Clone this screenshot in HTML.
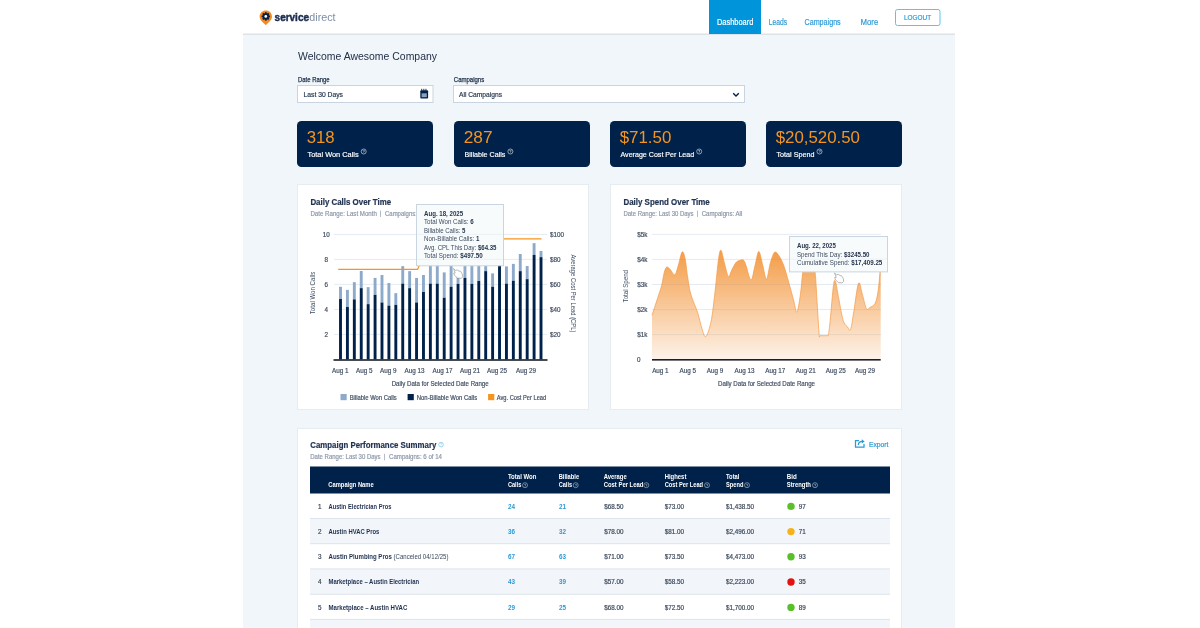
<!DOCTYPE html>
<html><head><meta charset="utf-8"><title>Service Direct Dashboard</title>
<style>
html,body{margin:0;padding:0;background:#ffffff;width:1200px;height:628px;overflow:hidden;}
svg{display:block;font-family:"Liberation Sans", sans-serif;will-change:transform;}
</style></head><body>
<svg width="1200" height="628" viewBox="0 0 1200 628">
<rect x="0.00" y="0.00" width="1200.00" height="628.00" fill="#ffffff" />
<rect x="243.00" y="34.00" width="712.00" height="594.00" fill="#f1f6fa" />
<rect x="243.00" y="33.60" width="712.00" height="1.10" fill="#d5dae0" />
<g transform="translate(265.8,16.6)"><path d="M0,-6.2 C3.5,-6.2 6.2,-3.5 6.2,0 C6.2,3.6 2.5,6.2 0,8.6 C-2.5,6.2 -6.2,3.6 -6.2,0 C-6.2,-3.5 -3.5,-6.2 0,-6.2 Z" fill="#f7891f"/></g>
<g transform="translate(265.8,16.4)"><rect x="-0.9" y="-4.2" width="1.8" height="2" transform="rotate(0)" fill="#00224a"/><rect x="-0.9" y="-4.2" width="1.8" height="2" transform="rotate(45)" fill="#00224a"/><rect x="-0.9" y="-4.2" width="1.8" height="2" transform="rotate(90)" fill="#00224a"/><rect x="-0.9" y="-4.2" width="1.8" height="2" transform="rotate(135)" fill="#00224a"/><rect x="-0.9" y="-4.2" width="1.8" height="2" transform="rotate(180)" fill="#00224a"/><rect x="-0.9" y="-4.2" width="1.8" height="2" transform="rotate(225)" fill="#00224a"/><rect x="-0.9" y="-4.2" width="1.8" height="2" transform="rotate(270)" fill="#00224a"/><rect x="-0.9" y="-4.2" width="1.8" height="2" transform="rotate(315)" fill="#00224a"/><circle r="3.2" fill="#00224a"/><circle r="1.4" fill="#ffffff"/></g>
<text x="274.60" y="20.60" font-size="10.00" fill="#1c2d4f" font-weight="700" textLength="34.40" lengthAdjust="spacingAndGlyphs" stroke="#1c2d4f" stroke-width="0.45">service</text>
<text x="309.30" y="20.60" font-size="10.20" fill="#7d8ea6" font-weight="300" textLength="26.20" lengthAdjust="spacingAndGlyphs" >direct</text>
<rect x="709.00" y="0.00" width="52.00" height="34.00" fill="#0094db" />
<text x="717.00" y="25.00" font-size="8.30" fill="#ffffff" textLength="36.30" lengthAdjust="spacingAndGlyphs" stroke="#ffffff" stroke-width="0.18" >Dashboard</text>
<text x="768.80" y="25.00" font-size="8.30" fill="#2b9ad6" textLength="18.40" lengthAdjust="spacingAndGlyphs" stroke="#2b9ad6" stroke-width="0.18" >Leads</text>
<text x="804.50" y="25.00" font-size="8.30" fill="#2b9ad6" textLength="36.20" lengthAdjust="spacingAndGlyphs" stroke="#2b9ad6" stroke-width="0.18" >Campaigns</text>
<text x="860.50" y="25.00" font-size="8.30" fill="#2b9ad6" textLength="17.70" lengthAdjust="spacingAndGlyphs" stroke="#2b9ad6" stroke-width="0.18" >More</text>
<rect x="895.5" y="9.5" width="44.5" height="16" rx="2" fill="#ffffff" stroke="#5ec3ec" stroke-width="1"/>
<text x="904.00" y="20.20" font-size="6.60" fill="#2a9ed8" textLength="27.20" lengthAdjust="spacingAndGlyphs" stroke="#2a9ed8" stroke-width="0.18" >LOGOUT</text>
<text x="298.00" y="59.70" font-size="10.80" fill="#223048" textLength="139.00" lengthAdjust="spacingAndGlyphs" >Welcome Awesome Company</text>
<text x="298.00" y="82.20" font-size="6.50" fill="#26364f" textLength="31.60" lengthAdjust="spacingAndGlyphs" stroke="#26364f" stroke-width="0.25">Date Range</text>
<text x="453.80" y="82.20" font-size="6.50" fill="#26364f" textLength="30.40" lengthAdjust="spacingAndGlyphs" stroke="#26364f" stroke-width="0.25">Campaigns</text>
<rect x="297.5" y="85.5" width="135.5" height="17" fill="#ffffff" stroke="#c9d4e1" stroke-width="1"/>
<rect x="453.5" y="85.5" width="291" height="17" fill="#ffffff" stroke="#c9d4e1" stroke-width="1"/>
<text x="303.50" y="96.70" font-size="6.90" fill="#26364f" textLength="39.50" lengthAdjust="spacingAndGlyphs" stroke="#26364f" stroke-width="0.18" >Last 30 Days</text>
<text x="459.00" y="96.60" font-size="6.90" fill="#26364f" textLength="43.00" lengthAdjust="spacingAndGlyphs" stroke="#26364f" stroke-width="0.18" >All Campaigns</text>
<g><rect x="420.3" y="90.2" width="7.8" height="8.3" rx="1" fill="#00224a"/><rect x="421.6" y="93.3" width="5.2" height="3.9" fill="#8aa0bd"/><rect x="421.3" y="88.8" width="0.9" height="1.8" fill="#00224a"/><rect x="423.4" y="88.8" width="0.9" height="1.8" fill="#00224a"/><rect x="425.5" y="88.8" width="0.9" height="1.8" fill="#00224a"/></g>
<path d="M733.2,93.2 L736,96 L738.8,93.2" fill="none" stroke="#00224a" stroke-width="1.4"/>
<rect x="297.00" y="121.00" width="136.00" height="46.00" fill="#00224a" rx="4.5" />
<text x="306.70" y="143.00" font-size="16.60" fill="#f7941d" textLength="28.00" lengthAdjust="spacingAndGlyphs" >318</text>
<text x="307.50" y="156.60" font-size="7.70" fill="#ffffff" textLength="51.20" lengthAdjust="spacingAndGlyphs" stroke="#ffffff" stroke-width="0.18" >Total Won Calls</text>
<circle cx="363.7" cy="151.5" r="2.5" fill="none" stroke="#ffffff" stroke-width="0.55"/>
<text x="363.7" y="153.05" font-size="3.88" fill="#ffffff" text-anchor="middle">?</text>
<rect x="454.00" y="121.00" width="136.00" height="46.00" fill="#00224a" rx="4.5" />
<text x="463.70" y="143.00" font-size="16.60" fill="#f7941d" textLength="28.80" lengthAdjust="spacingAndGlyphs" >287</text>
<text x="464.50" y="156.60" font-size="7.70" fill="#ffffff" textLength="40.90" lengthAdjust="spacingAndGlyphs" stroke="#ffffff" stroke-width="0.18" >Billable Calls</text>
<circle cx="510.4" cy="151.5" r="2.5" fill="none" stroke="#ffffff" stroke-width="0.55"/>
<text x="510.4" y="153.05" font-size="3.88" fill="#ffffff" text-anchor="middle">?</text>
<rect x="610.00" y="121.00" width="136.00" height="46.00" fill="#00224a" rx="4.5" />
<text x="619.70" y="143.00" font-size="16.60" fill="#f7941d" textLength="51.60" lengthAdjust="spacingAndGlyphs" >$71.50</text>
<text x="620.50" y="156.60" font-size="7.70" fill="#ffffff" textLength="73.70" lengthAdjust="spacingAndGlyphs" stroke="#ffffff" stroke-width="0.18" >Average Cost Per Lead</text>
<circle cx="699.2" cy="151.5" r="2.5" fill="none" stroke="#ffffff" stroke-width="0.55"/>
<text x="699.2" y="153.05" font-size="3.88" fill="#ffffff" text-anchor="middle">?</text>
<rect x="766.00" y="121.00" width="136.00" height="46.00" fill="#00224a" rx="4.5" />
<text x="775.70" y="143.00" font-size="16.60" fill="#f7941d" textLength="84.30" lengthAdjust="spacingAndGlyphs" >$20,520.50</text>
<text x="776.50" y="156.60" font-size="7.70" fill="#ffffff" textLength="38.00" lengthAdjust="spacingAndGlyphs" stroke="#ffffff" stroke-width="0.18" >Total Spend</text>
<circle cx="819.5" cy="151.5" r="2.5" fill="none" stroke="#ffffff" stroke-width="0.55"/>
<text x="819.5" y="153.05" font-size="3.88" fill="#ffffff" text-anchor="middle">?</text>
<rect x="297.5" y="184.5" width="291" height="225" fill="#ffffff" stroke="#e6ecf2" stroke-width="1"/>
<rect x="610.5" y="184.5" width="291" height="225" fill="#ffffff" stroke="#e6ecf2" stroke-width="1"/>
<rect x="297.5" y="428.5" width="604" height="209" fill="#ffffff" stroke="#e6ecf2" stroke-width="1"/>
<text x="310.40" y="205.20" font-size="8.40" fill="#1f3050" font-weight="700" textLength="80.80" lengthAdjust="spacingAndGlyphs" stroke="#1f3050" stroke-width="0.2">Daily Calls Over Time</text>
<text x="310.40" y="215.80" font-size="6.40" fill="#8b97a8" textLength="66.50" lengthAdjust="spacingAndGlyphs" stroke="#8b97a8" stroke-width="0.18" >Date Range: Last Month</text>
<rect x="380.30" y="210.60" width="0.65" height="6.4" fill="#8b97a8"/>
<text x="385.00" y="215.80" font-size="6.40" fill="#8b97a8" textLength="39.80" lengthAdjust="spacingAndGlyphs" stroke="#8b97a8" stroke-width="0.18" >Campaigns: All</text>
<rect x="334.00" y="333.90" width="213.00" height="1.00" fill="#e4ebf3" />
<rect x="334.00" y="308.90" width="213.00" height="1.00" fill="#e4ebf3" />
<rect x="334.00" y="283.90" width="213.00" height="1.00" fill="#e4ebf3" />
<rect x="334.00" y="258.90" width="213.00" height="1.00" fill="#e4ebf3" />
<rect x="334.00" y="233.90" width="213.00" height="1.00" fill="#e4ebf3" />
<text x="326.30" y="336.60" font-size="6.30" fill="#3e4b5e" text-anchor="middle" stroke="#3e4b5e" stroke-width="0.18" >2</text>
<text x="326.30" y="311.60" font-size="6.30" fill="#3e4b5e" text-anchor="middle" stroke="#3e4b5e" stroke-width="0.18" >4</text>
<text x="326.30" y="286.60" font-size="6.30" fill="#3e4b5e" text-anchor="middle" stroke="#3e4b5e" stroke-width="0.18" >6</text>
<text x="326.30" y="261.60" font-size="6.30" fill="#3e4b5e" text-anchor="middle" stroke="#3e4b5e" stroke-width="0.18" >8</text>
<text x="326.30" y="236.60" font-size="6.30" fill="#3e4b5e" text-anchor="middle" stroke="#3e4b5e" stroke-width="0.18" >10</text>
<text x="550.00" y="336.60" font-size="6.30" fill="#3e4b5e" stroke="#3e4b5e" stroke-width="0.18" >$20</text>
<text x="550.00" y="311.60" font-size="6.30" fill="#3e4b5e" stroke="#3e4b5e" stroke-width="0.18" >$40</text>
<text x="550.00" y="286.60" font-size="6.30" fill="#3e4b5e" stroke="#3e4b5e" stroke-width="0.18" >$60</text>
<text x="550.00" y="261.60" font-size="6.30" fill="#3e4b5e" stroke="#3e4b5e" stroke-width="0.18" >$80</text>
<text x="550.00" y="236.60" font-size="6.30" fill="#3e4b5e" stroke="#3e4b5e" stroke-width="0.18" >$100</text>
<rect x="339.05" y="286.77" width="2.90" height="12.25" fill="#8eaacb" />
<rect x="339.05" y="299.02" width="2.90" height="60.38" fill="#00224a" />
<rect x="345.96" y="289.90" width="2.90" height="17.12" fill="#8eaacb" />
<rect x="345.96" y="307.02" width="2.90" height="52.38" fill="#00224a" />
<rect x="352.88" y="282.15" width="2.90" height="17.25" fill="#8eaacb" />
<rect x="352.88" y="299.40" width="2.90" height="60.00" fill="#00224a" />
<rect x="359.79" y="271.02" width="2.90" height="17.12" fill="#8eaacb" />
<rect x="359.79" y="288.15" width="2.90" height="71.25" fill="#00224a" />
<rect x="366.71" y="287.15" width="2.90" height="17.00" fill="#8eaacb" />
<rect x="366.71" y="304.15" width="2.90" height="55.25" fill="#00224a" />
<rect x="373.62" y="277.90" width="2.90" height="17.00" fill="#8eaacb" />
<rect x="373.62" y="294.90" width="2.90" height="64.50" fill="#00224a" />
<rect x="380.53" y="275.02" width="2.90" height="27.50" fill="#8eaacb" />
<rect x="380.53" y="302.52" width="2.90" height="56.88" fill="#00224a" />
<rect x="387.45" y="283.02" width="2.90" height="22.62" fill="#8eaacb" />
<rect x="387.45" y="305.65" width="2.90" height="53.75" fill="#00224a" />
<rect x="394.36" y="293.15" width="2.90" height="11.75" fill="#8eaacb" />
<rect x="394.36" y="304.90" width="2.90" height="54.50" fill="#00224a" />
<rect x="401.28" y="266.15" width="2.90" height="17.50" fill="#8eaacb" />
<rect x="401.28" y="283.65" width="2.90" height="75.75" fill="#00224a" />
<rect x="408.19" y="271.15" width="2.90" height="17.00" fill="#8eaacb" />
<rect x="408.19" y="288.15" width="2.90" height="71.25" fill="#00224a" />
<rect x="415.10" y="277.90" width="2.90" height="24.62" fill="#8eaacb" />
<rect x="415.10" y="302.52" width="2.90" height="56.88" fill="#00224a" />
<rect x="422.02" y="275.02" width="2.90" height="17.00" fill="#8eaacb" />
<rect x="422.02" y="292.02" width="2.90" height="67.38" fill="#00224a" />
<rect x="428.93" y="259.40" width="2.90" height="24.25" fill="#8eaacb" />
<rect x="428.93" y="283.65" width="2.90" height="75.75" fill="#00224a" />
<rect x="435.85" y="259.40" width="2.90" height="24.25" fill="#8eaacb" />
<rect x="435.85" y="283.65" width="2.90" height="75.75" fill="#00224a" />
<rect x="442.76" y="272.40" width="2.90" height="25.38" fill="#8eaacb" />
<rect x="442.76" y="297.77" width="2.90" height="61.62" fill="#00224a" />
<rect x="449.67" y="259.40" width="2.90" height="27.38" fill="#8eaacb" />
<rect x="449.67" y="286.77" width="2.90" height="72.62" fill="#00224a" />
<rect x="456.59" y="271.90" width="2.90" height="12.00" fill="#8eaacb" />
<rect x="456.59" y="283.90" width="2.90" height="75.50" fill="#00224a" />
<rect x="463.50" y="259.40" width="2.90" height="18.50" fill="#8eaacb" />
<rect x="463.50" y="277.90" width="2.90" height="81.50" fill="#00224a" />
<rect x="470.42" y="259.40" width="2.90" height="24.50" fill="#8eaacb" />
<rect x="470.42" y="283.90" width="2.90" height="75.50" fill="#00224a" />
<rect x="477.33" y="259.40" width="2.90" height="21.62" fill="#8eaacb" />
<rect x="477.33" y="281.02" width="2.90" height="78.38" fill="#00224a" />
<rect x="484.24" y="259.40" width="2.90" height="11.75" fill="#8eaacb" />
<rect x="484.24" y="271.15" width="2.90" height="88.25" fill="#00224a" />
<rect x="491.16" y="273.40" width="2.90" height="13.38" fill="#8eaacb" />
<rect x="491.16" y="286.77" width="2.90" height="72.62" fill="#00224a" />
<rect x="498.07" y="259.40" width="2.90" height="0.00" fill="#8eaacb" />
<rect x="498.07" y="259.40" width="2.90" height="100.00" fill="#00224a" />
<rect x="504.99" y="266.40" width="2.90" height="17.25" fill="#8eaacb" />
<rect x="504.99" y="283.65" width="2.90" height="75.75" fill="#00224a" />
<rect x="511.90" y="263.90" width="2.90" height="16.88" fill="#8eaacb" />
<rect x="511.90" y="280.77" width="2.90" height="78.62" fill="#00224a" />
<rect x="518.81" y="254.02" width="2.90" height="17.12" fill="#8eaacb" />
<rect x="518.81" y="271.15" width="2.90" height="88.25" fill="#00224a" />
<rect x="525.73" y="266.02" width="2.90" height="13.12" fill="#8eaacb" />
<rect x="525.73" y="279.15" width="2.90" height="80.25" fill="#00224a" />
<rect x="532.64" y="243.15" width="2.90" height="11.75" fill="#8eaacb" />
<rect x="532.64" y="254.90" width="2.90" height="104.50" fill="#00224a" />
<rect x="539.56" y="251.02" width="2.90" height="6.12" fill="#8eaacb" />
<rect x="539.56" y="257.15" width="2.90" height="102.25" fill="#00224a" />
<rect x="333.50" y="359.20" width="214.00" height="1.60" fill="#1b1f26" />
<path d="M338.2,269.4 L417.5,269.4 L420,264 L420,238.8 L541.5,238.8" fill="none" stroke="#f7941d" stroke-width="1.3"/>
<text x="332.00" y="373.00" font-size="6.30" fill="#3f4e63" stroke="#3f4e63" stroke-width="0.18" >Aug 1</text>
<text x="356.00" y="373.00" font-size="6.30" fill="#3f4e63" stroke="#3f4e63" stroke-width="0.18" >Aug 5</text>
<text x="380.00" y="373.00" font-size="6.30" fill="#3f4e63" stroke="#3f4e63" stroke-width="0.18" >Aug 9</text>
<text x="404.50" y="373.00" font-size="6.30" fill="#3f4e63" stroke="#3f4e63" stroke-width="0.18" >Aug 13</text>
<text x="432.50" y="373.00" font-size="6.30" fill="#3f4e63" stroke="#3f4e63" stroke-width="0.18" >Aug 17</text>
<text x="460.00" y="373.00" font-size="6.30" fill="#3f4e63" stroke="#3f4e63" stroke-width="0.18" >Aug 21</text>
<text x="487.00" y="373.00" font-size="6.30" fill="#3f4e63" stroke="#3f4e63" stroke-width="0.18" >Aug 25</text>
<text x="516.00" y="373.00" font-size="6.30" fill="#3f4e63" stroke="#3f4e63" stroke-width="0.18" >Aug 29</text>
<text x="440.20" y="386.00" font-size="6.60" fill="#3f4e63" text-anchor="middle" textLength="97.00" lengthAdjust="spacingAndGlyphs" stroke="#3f4e63" stroke-width="0.18" >Daily Data for Selected Date Range</text>
<text x="0" y="0" font-size="6.6" fill="#3f4e63" text-anchor="middle" transform="translate(315.2,293) rotate(-90)" textLength="42.4" lengthAdjust="spacingAndGlyphs">Total Won Calls</text>
<text x="0" y="0" font-size="6.6" fill="#3f4e63" text-anchor="middle" transform="translate(571.2,293.5) rotate(90)" textLength="78" lengthAdjust="spacingAndGlyphs">Average Cost Per Lead (CPL)</text>
<rect x="340.50" y="394.00" width="6.20" height="6.20" fill="#8eaacb" />
<text x="349.70" y="399.50" font-size="6.30" fill="#3f4e63" textLength="47.00" lengthAdjust="spacingAndGlyphs" stroke="#3f4e63" stroke-width="0.18" >Billable Won Calls</text>
<rect x="407.60" y="394.00" width="6.20" height="6.20" fill="#00224a" />
<text x="416.80" y="399.50" font-size="6.30" fill="#3f4e63" textLength="60.40" lengthAdjust="spacingAndGlyphs" stroke="#3f4e63" stroke-width="0.18" >Non-Billable Won Calls</text>
<rect x="488.10" y="394.00" width="6.20" height="6.20" fill="#f7941d" />
<text x="496.80" y="399.50" font-size="6.30" fill="#3f4e63" textLength="49.40" lengthAdjust="spacingAndGlyphs" stroke="#3f4e63" stroke-width="0.18" >Avg. Cost Per Lead</text>
<rect x="416.5" y="204.5" width="87" height="61.3" fill="#f8fbfb" stroke="#c9d6e2" stroke-width="1"/>
<rect x="417" y="233.9" width="86" height="1" fill="#e4ebf3" fill-opacity="0.6"/><rect x="417" y="258.9" width="86" height="1" fill="#e4ebf3" fill-opacity="0.6"/>
<text x="424.00" y="216.00" font-size="6.40" fill="#26364f" font-weight="700" textLength="39.10" lengthAdjust="spacingAndGlyphs" >Aug. 18, 2025</text>
<text x="424" y="224.30" font-size="6.4" fill="#3d4b60" textLength="49.70" lengthAdjust="spacingAndGlyphs">Total Won Calls: <tspan font-weight="700" fill="#26364f">6</tspan></text>
<text x="424" y="232.70" font-size="6.4" fill="#3d4b60" textLength="41.40" lengthAdjust="spacingAndGlyphs">Billable Calls: <tspan font-weight="700" fill="#26364f">5</tspan></text>
<text x="424" y="241.20" font-size="6.4" fill="#3d4b60" textLength="55.40" lengthAdjust="spacingAndGlyphs">Non-Billable Calls: <tspan font-weight="700" fill="#26364f">1</tspan></text>
<text x="424" y="249.60" font-size="6.4" fill="#3d4b60" textLength="72.40" lengthAdjust="spacingAndGlyphs">Avg. CPL This Day: <tspan font-weight="700" fill="#26364f">$64.35</tspan></text>
<text x="424" y="257.80" font-size="6.4" fill="#3d4b60" textLength="58.70" lengthAdjust="spacingAndGlyphs">Total Spend: <tspan font-weight="700" fill="#26364f">$497.50</tspan></text>
<path d="M453.5,268.5 l2.2,2 l1.5,-0.7 l1.8,1.3 l1.6,0.2 l1.6,2.5 l0.6,3 l-1.8,1.6 l-3.5,-0.3 l-3,-2.8 l-0.8,-2.2 l1.5,-0.2 z" fill="#ffffff" stroke="#8a8a8a" stroke-width="0.6"/>
<text x="623.40" y="205.00" font-size="8.40" fill="#1f3050" font-weight="700" textLength="86.40" lengthAdjust="spacingAndGlyphs" stroke="#1f3050" stroke-width="0.2">Daily Spend Over Time</text>
<text x="623.40" y="215.80" font-size="6.40" fill="#8b97a8" textLength="70.20" lengthAdjust="spacingAndGlyphs" stroke="#8b97a8" stroke-width="0.18" >Date Range: Last 30 Days</text>
<rect x="697.30" y="210.60" width="0.65" height="6.4" fill="#8b97a8"/>
<text x="701.70" y="215.80" font-size="6.40" fill="#8b97a8" textLength="40.60" lengthAdjust="spacingAndGlyphs" stroke="#8b97a8" stroke-width="0.18" >Campaigns: All</text>
<rect x="652.00" y="334.05" width="229.00" height="1.00" fill="#e4ebf3" />
<rect x="652.00" y="309.00" width="229.00" height="1.00" fill="#e4ebf3" />
<rect x="652.00" y="283.95" width="229.00" height="1.00" fill="#e4ebf3" />
<rect x="652.00" y="258.90" width="229.00" height="1.00" fill="#e4ebf3" />
<rect x="652.00" y="233.85" width="229.00" height="1.00" fill="#e4ebf3" />
<text x="647.30" y="336.75" font-size="6.30" fill="#3e4b5e" text-anchor="end" stroke="#3e4b5e" stroke-width="0.18" >$1k</text>
<text x="647.30" y="311.70" font-size="6.30" fill="#3e4b5e" text-anchor="end" stroke="#3e4b5e" stroke-width="0.18" >$2k</text>
<text x="647.30" y="286.65" font-size="6.30" fill="#3e4b5e" text-anchor="end" stroke="#3e4b5e" stroke-width="0.18" >$3k</text>
<text x="647.30" y="261.60" font-size="6.30" fill="#3e4b5e" text-anchor="end" stroke="#3e4b5e" stroke-width="0.18" >$4k</text>
<text x="647.30" y="236.55" font-size="6.30" fill="#3e4b5e" text-anchor="end" stroke="#3e4b5e" stroke-width="0.18" >$5k</text>
<text x="637.00" y="361.80" font-size="6.30" fill="#3e4b5e" stroke="#3e4b5e" stroke-width="0.18" >0</text>
<defs><linearGradient id="ag" x1="0" y1="240" x2="0" y2="360" gradientUnits="userSpaceOnUse"><stop offset="0" stop-color="#f39437"/><stop offset="1" stop-color="#fdf3ea"/></linearGradient></defs>
<path d="M652.00,315.30 C652.92,312.50 655.88,303.52 657.50,298.50 C659.12,293.48 660.58,289.52 661.70,285.20 C662.82,280.88 663.37,275.62 664.20,272.60 C665.03,269.58 665.72,267.65 666.70,267.10 C667.68,266.55 668.75,268.02 670.10,269.30 C671.45,270.58 673.42,275.52 674.80,274.80 C676.18,274.08 677.18,268.80 678.40,265.00 C679.62,261.20 680.98,253.10 682.10,252.00 C683.22,250.90 684.18,254.27 685.10,258.40 C686.02,262.53 686.75,271.23 687.60,276.80 C688.45,282.37 689.22,287.62 690.20,291.80 C691.18,295.98 692.25,298.42 693.50,301.90 C694.75,305.38 696.30,308.25 697.70,312.70 C699.10,317.15 700.65,324.60 701.90,328.60 C703.15,332.60 704.10,336.28 705.20,336.70 C706.30,337.12 707.38,334.40 708.50,331.10 C709.62,327.80 710.78,323.72 711.90,316.90 C713.02,310.08 714.08,299.95 715.20,290.20 C716.32,280.45 717.62,265.03 718.60,258.40 C719.58,251.77 720.13,249.63 721.10,250.40 C722.07,251.17 723.18,258.65 724.40,263.00 C725.62,267.35 727.18,275.32 728.40,276.50 C729.62,277.68 730.45,272.42 731.70,270.10 C732.95,267.78 734.60,264.20 735.90,262.60 C737.20,261.00 738.25,260.92 739.50,260.50 C740.75,260.08 742.33,259.33 743.40,260.10 C744.47,260.87 744.63,261.77 745.90,265.10 C747.17,268.43 749.47,280.10 751.00,280.10 C752.53,280.10 753.80,269.88 755.10,265.10 C756.40,260.32 757.53,251.40 758.80,251.40 C760.07,251.40 761.42,260.45 762.70,265.10 C763.98,269.75 765.25,279.58 766.50,279.30 C767.75,279.02 768.88,267.87 770.20,263.40 C771.52,258.93 773.02,253.90 774.40,252.50 C775.78,251.10 776.97,252.90 778.50,255.00 C780.03,257.10 781.92,260.63 783.60,265.10 C785.28,269.57 786.93,275.95 788.60,281.80 C790.27,287.65 792.22,295.13 793.60,300.20 C794.98,305.27 795.78,313.03 796.90,312.20 C798.02,311.37 799.32,301.93 800.30,295.20 C801.28,288.47 801.85,279.33 802.80,271.80 C803.75,264.27 804.97,254.63 806.00,250.00 C807.03,245.37 808.00,243.67 809.00,244.00 C810.00,244.33 810.98,247.35 812.00,252.00 C813.02,256.65 814.22,263.02 815.10,271.90 C815.98,280.78 816.62,294.85 817.30,305.30 C817.98,315.75 818.67,329.55 819.20,334.60 C819.73,339.65 819.20,335.43 820.50,335.60 C821.80,335.77 825.68,335.77 827.00,335.60 C828.32,335.43 827.87,337.15 828.40,334.60 C828.93,332.05 829.37,328.42 830.20,320.30 C831.03,312.18 832.52,292.35 833.40,285.90 C834.28,279.45 834.60,279.45 835.50,281.60 C836.40,283.75 837.53,292.35 838.80,298.80 C840.07,305.25 841.67,315.63 843.10,320.30 C844.53,324.97 846.15,325.28 847.40,326.80 C848.65,328.32 849.53,331.92 850.60,329.40 C851.67,326.88 852.48,319.38 853.80,311.70 C855.12,304.02 857.07,286.17 858.50,283.30 C859.93,280.43 861.10,290.30 862.40,294.50 C863.70,298.70 865.03,306.35 866.30,308.50 C867.57,310.65 868.50,308.30 870.00,307.40 C871.50,306.50 873.88,306.32 875.30,303.10 C876.72,299.88 877.60,294.95 878.50,288.10 C879.40,281.25 880.33,266.35 880.70,262.00 L880.7,359.6 L652,359.6 Z" fill="url(#ag)"/>
<clipPath id="ac"><path d="M652.00,315.30 C652.92,312.50 655.88,303.52 657.50,298.50 C659.12,293.48 660.58,289.52 661.70,285.20 C662.82,280.88 663.37,275.62 664.20,272.60 C665.03,269.58 665.72,267.65 666.70,267.10 C667.68,266.55 668.75,268.02 670.10,269.30 C671.45,270.58 673.42,275.52 674.80,274.80 C676.18,274.08 677.18,268.80 678.40,265.00 C679.62,261.20 680.98,253.10 682.10,252.00 C683.22,250.90 684.18,254.27 685.10,258.40 C686.02,262.53 686.75,271.23 687.60,276.80 C688.45,282.37 689.22,287.62 690.20,291.80 C691.18,295.98 692.25,298.42 693.50,301.90 C694.75,305.38 696.30,308.25 697.70,312.70 C699.10,317.15 700.65,324.60 701.90,328.60 C703.15,332.60 704.10,336.28 705.20,336.70 C706.30,337.12 707.38,334.40 708.50,331.10 C709.62,327.80 710.78,323.72 711.90,316.90 C713.02,310.08 714.08,299.95 715.20,290.20 C716.32,280.45 717.62,265.03 718.60,258.40 C719.58,251.77 720.13,249.63 721.10,250.40 C722.07,251.17 723.18,258.65 724.40,263.00 C725.62,267.35 727.18,275.32 728.40,276.50 C729.62,277.68 730.45,272.42 731.70,270.10 C732.95,267.78 734.60,264.20 735.90,262.60 C737.20,261.00 738.25,260.92 739.50,260.50 C740.75,260.08 742.33,259.33 743.40,260.10 C744.47,260.87 744.63,261.77 745.90,265.10 C747.17,268.43 749.47,280.10 751.00,280.10 C752.53,280.10 753.80,269.88 755.10,265.10 C756.40,260.32 757.53,251.40 758.80,251.40 C760.07,251.40 761.42,260.45 762.70,265.10 C763.98,269.75 765.25,279.58 766.50,279.30 C767.75,279.02 768.88,267.87 770.20,263.40 C771.52,258.93 773.02,253.90 774.40,252.50 C775.78,251.10 776.97,252.90 778.50,255.00 C780.03,257.10 781.92,260.63 783.60,265.10 C785.28,269.57 786.93,275.95 788.60,281.80 C790.27,287.65 792.22,295.13 793.60,300.20 C794.98,305.27 795.78,313.03 796.90,312.20 C798.02,311.37 799.32,301.93 800.30,295.20 C801.28,288.47 801.85,279.33 802.80,271.80 C803.75,264.27 804.97,254.63 806.00,250.00 C807.03,245.37 808.00,243.67 809.00,244.00 C810.00,244.33 810.98,247.35 812.00,252.00 C813.02,256.65 814.22,263.02 815.10,271.90 C815.98,280.78 816.62,294.85 817.30,305.30 C817.98,315.75 818.67,329.55 819.20,334.60 C819.73,339.65 819.20,335.43 820.50,335.60 C821.80,335.77 825.68,335.77 827.00,335.60 C828.32,335.43 827.87,337.15 828.40,334.60 C828.93,332.05 829.37,328.42 830.20,320.30 C831.03,312.18 832.52,292.35 833.40,285.90 C834.28,279.45 834.60,279.45 835.50,281.60 C836.40,283.75 837.53,292.35 838.80,298.80 C840.07,305.25 841.67,315.63 843.10,320.30 C844.53,324.97 846.15,325.28 847.40,326.80 C848.65,328.32 849.53,331.92 850.60,329.40 C851.67,326.88 852.48,319.38 853.80,311.70 C855.12,304.02 857.07,286.17 858.50,283.30 C859.93,280.43 861.10,290.30 862.40,294.50 C863.70,298.70 865.03,306.35 866.30,308.50 C867.57,310.65 868.50,308.30 870.00,307.40 C871.50,306.50 873.88,306.32 875.30,303.10 C876.72,299.88 877.60,294.95 878.50,288.10 C879.40,281.25 880.33,266.35 880.70,262.00 L880.7,359.6 L652,359.6 Z"/></clipPath>
<g clip-path="url(#ac)">
<rect x="652" y="334.05" width="229" height="1" fill="#7d8796" fill-opacity="0.13"/>
<rect x="652" y="309.00" width="229" height="1" fill="#7d8796" fill-opacity="0.13"/>
<rect x="652" y="283.95" width="229" height="1" fill="#7d8796" fill-opacity="0.13"/>
<rect x="652" y="258.90" width="229" height="1" fill="#7d8796" fill-opacity="0.13"/>
</g>
<path d="M652.00,315.30 C652.92,312.50 655.88,303.52 657.50,298.50 C659.12,293.48 660.58,289.52 661.70,285.20 C662.82,280.88 663.37,275.62 664.20,272.60 C665.03,269.58 665.72,267.65 666.70,267.10 C667.68,266.55 668.75,268.02 670.10,269.30 C671.45,270.58 673.42,275.52 674.80,274.80 C676.18,274.08 677.18,268.80 678.40,265.00 C679.62,261.20 680.98,253.10 682.10,252.00 C683.22,250.90 684.18,254.27 685.10,258.40 C686.02,262.53 686.75,271.23 687.60,276.80 C688.45,282.37 689.22,287.62 690.20,291.80 C691.18,295.98 692.25,298.42 693.50,301.90 C694.75,305.38 696.30,308.25 697.70,312.70 C699.10,317.15 700.65,324.60 701.90,328.60 C703.15,332.60 704.10,336.28 705.20,336.70 C706.30,337.12 707.38,334.40 708.50,331.10 C709.62,327.80 710.78,323.72 711.90,316.90 C713.02,310.08 714.08,299.95 715.20,290.20 C716.32,280.45 717.62,265.03 718.60,258.40 C719.58,251.77 720.13,249.63 721.10,250.40 C722.07,251.17 723.18,258.65 724.40,263.00 C725.62,267.35 727.18,275.32 728.40,276.50 C729.62,277.68 730.45,272.42 731.70,270.10 C732.95,267.78 734.60,264.20 735.90,262.60 C737.20,261.00 738.25,260.92 739.50,260.50 C740.75,260.08 742.33,259.33 743.40,260.10 C744.47,260.87 744.63,261.77 745.90,265.10 C747.17,268.43 749.47,280.10 751.00,280.10 C752.53,280.10 753.80,269.88 755.10,265.10 C756.40,260.32 757.53,251.40 758.80,251.40 C760.07,251.40 761.42,260.45 762.70,265.10 C763.98,269.75 765.25,279.58 766.50,279.30 C767.75,279.02 768.88,267.87 770.20,263.40 C771.52,258.93 773.02,253.90 774.40,252.50 C775.78,251.10 776.97,252.90 778.50,255.00 C780.03,257.10 781.92,260.63 783.60,265.10 C785.28,269.57 786.93,275.95 788.60,281.80 C790.27,287.65 792.22,295.13 793.60,300.20 C794.98,305.27 795.78,313.03 796.90,312.20 C798.02,311.37 799.32,301.93 800.30,295.20 C801.28,288.47 801.85,279.33 802.80,271.80 C803.75,264.27 804.97,254.63 806.00,250.00 C807.03,245.37 808.00,243.67 809.00,244.00 C810.00,244.33 810.98,247.35 812.00,252.00 C813.02,256.65 814.22,263.02 815.10,271.90 C815.98,280.78 816.62,294.85 817.30,305.30 C817.98,315.75 818.67,329.55 819.20,334.60 C819.73,339.65 819.20,335.43 820.50,335.60 C821.80,335.77 825.68,335.77 827.00,335.60 C828.32,335.43 827.87,337.15 828.40,334.60 C828.93,332.05 829.37,328.42 830.20,320.30 C831.03,312.18 832.52,292.35 833.40,285.90 C834.28,279.45 834.60,279.45 835.50,281.60 C836.40,283.75 837.53,292.35 838.80,298.80 C840.07,305.25 841.67,315.63 843.10,320.30 C844.53,324.97 846.15,325.28 847.40,326.80 C848.65,328.32 849.53,331.92 850.60,329.40 C851.67,326.88 852.48,319.38 853.80,311.70 C855.12,304.02 857.07,286.17 858.50,283.30 C859.93,280.43 861.10,290.30 862.40,294.50 C863.70,298.70 865.03,306.35 866.30,308.50 C867.57,310.65 868.50,308.30 870.00,307.40 C871.50,306.50 873.88,306.32 875.30,303.10 C876.72,299.88 877.60,294.95 878.50,288.10 C879.40,281.25 880.33,266.35 880.70,262.00" fill="none" stroke="#f39a45" stroke-width="0.7"/>
<rect x="652.00" y="359.00" width="228.70" height="1.60" fill="#1b1f26" />
<text x="660.40" y="373.00" font-size="6.30" fill="#3f4e63" text-anchor="middle" stroke="#3f4e63" stroke-width="0.18" >Aug 1</text>
<text x="687.80" y="373.00" font-size="6.30" fill="#3f4e63" text-anchor="middle" stroke="#3f4e63" stroke-width="0.18" >Aug 5</text>
<text x="715.00" y="373.00" font-size="6.30" fill="#3f4e63" text-anchor="middle" stroke="#3f4e63" stroke-width="0.18" >Aug 9</text>
<text x="744.50" y="373.00" font-size="6.30" fill="#3f4e63" text-anchor="middle" stroke="#3f4e63" stroke-width="0.18" >Aug 13</text>
<text x="775.20" y="373.00" font-size="6.30" fill="#3f4e63" text-anchor="middle" stroke="#3f4e63" stroke-width="0.18" >Aug 17</text>
<text x="805.80" y="373.00" font-size="6.30" fill="#3f4e63" text-anchor="middle" stroke="#3f4e63" stroke-width="0.18" >Aug 21</text>
<text x="835.70" y="373.00" font-size="6.30" fill="#3f4e63" text-anchor="middle" stroke="#3f4e63" stroke-width="0.18" >Aug 25</text>
<text x="865.00" y="373.00" font-size="6.30" fill="#3f4e63" text-anchor="middle" stroke="#3f4e63" stroke-width="0.18" >Aug 29</text>
<text x="766.50" y="386.00" font-size="6.60" fill="#3f4e63" text-anchor="middle" textLength="97.00" lengthAdjust="spacingAndGlyphs" stroke="#3f4e63" stroke-width="0.18" >Daily Data for Selected Date Range</text>
<text x="0" y="0" font-size="6.6" fill="#3f4e63" text-anchor="middle" transform="translate(627.6,286.2) rotate(-90)" textLength="32.4" lengthAdjust="spacingAndGlyphs">Total Spend</text>
<rect x="789.5" y="236.5" width="98" height="35.4" fill="#f8fbfb" stroke="#c9d6e2" stroke-width="1"/>
<rect x="790" y="258.7" width="97" height="1" fill="#e4ebf3" fill-opacity="0.6"/>
<text x="797.00" y="248.20" font-size="6.40" fill="#26364f" font-weight="700" textLength="38.90" lengthAdjust="spacingAndGlyphs" >Aug. 22, 2025</text>
<text x="797" y="256.8" font-size="6.4" fill="#3d4b60" textLength="72.5" lengthAdjust="spacingAndGlyphs">Spend This Day: <tspan font-weight="700" fill="#26364f">$3245.50</tspan></text>
<text x="797" y="265.2" font-size="6.4" fill="#3d4b60" textLength="85.3" lengthAdjust="spacingAndGlyphs">Cumulative Spend: <tspan font-weight="700" fill="#26364f">$17,409.25</tspan></text>
<path d="M834.5,273 l2.2,2 l1.5,-0.7 l1.8,1.3 l1.6,0.2 l1.6,2.5 l0.6,3 l-1.8,1.6 l-3.5,-0.3 l-3,-2.8 l-0.8,-2.2 l1.5,-0.2 z" fill="#ffffff" stroke="#8a8a8a" stroke-width="0.6"/>
<text x="310.30" y="448.30" font-size="8.40" fill="#1f3050" font-weight="700" textLength="126.00" lengthAdjust="spacingAndGlyphs" stroke="#1f3050" stroke-width="0.2">Campaign Performance Summary</text>
<circle cx="441" cy="444.6" r="2.3" fill="none" stroke="#6cc3ee" stroke-width="0.7"/>
<text x="441" y="446.03" font-size="3.56" fill="#6cc3ee" text-anchor="middle">?</text>
<text x="310.30" y="459.10" font-size="6.40" fill="#8b97a8" textLength="70.30" lengthAdjust="spacingAndGlyphs" stroke="#8b97a8" stroke-width="0.18" >Date Range: Last 30 Days</text>
<rect x="384.30" y="453.90" width="0.65" height="6.4" fill="#8b97a8"/>
<text x="389.00" y="459.10" font-size="6.40" fill="#8b97a8" textLength="53.00" lengthAdjust="spacingAndGlyphs" stroke="#8b97a8" stroke-width="0.18" >Campaigns: 6 of 14</text>
<g fill="none" stroke="#2b9ad6" stroke-width="1.25"><path d="M859,440.5 L855.5,440.5 L855.5,447.2 L864,447.2 L864,444"/><path d="M858.3,445 C858.5,442.3 860.2,441.4 862.5,441.4"/></g>
<path d="M861.8,439.2 L864.6,441.4 L861.8,443.6 Z" fill="#2b9ad6"/>
<text x="868.90" y="446.60" font-size="6.90" fill="#2b9ad6" textLength="19.60" lengthAdjust="spacingAndGlyphs" stroke="#2b9ad6" stroke-width="0.2">Export</text>
<rect x="310.00" y="466.50" width="580.00" height="27.00" fill="#00224a" />
<text x="507.90" y="479.30" font-size="6.30" fill="#ffffff" font-weight="700" textLength="28.50" lengthAdjust="spacingAndGlyphs" >Total Won</text>
<text x="507.90" y="487.30" font-size="6.30" fill="#ffffff" font-weight="700" textLength="13.50" lengthAdjust="spacingAndGlyphs" >Calls</text>
<circle cx="525.0" cy="485.2" r="2.5" fill="none" stroke="#c9d3de" stroke-width="0.55"/>
<text x="525.0" y="486.9" font-size="3.8" fill="#c9d3de" text-anchor="middle">?</text>
<text x="558.70" y="479.30" font-size="6.30" fill="#ffffff" font-weight="700" textLength="20.40" lengthAdjust="spacingAndGlyphs" >Billable</text>
<text x="558.70" y="487.30" font-size="6.30" fill="#ffffff" font-weight="700" textLength="13.40" lengthAdjust="spacingAndGlyphs" >Calls</text>
<circle cx="575.7" cy="485.2" r="2.5" fill="none" stroke="#c9d3de" stroke-width="0.55"/>
<text x="575.7" y="486.9" font-size="3.8" fill="#c9d3de" text-anchor="middle">?</text>
<text x="603.70" y="479.30" font-size="6.30" fill="#ffffff" font-weight="700" textLength="23.00" lengthAdjust="spacingAndGlyphs" >Average</text>
<text x="603.70" y="487.30" font-size="6.30" fill="#ffffff" font-weight="700" textLength="39.70" lengthAdjust="spacingAndGlyphs" >Cost Per Lead</text>
<circle cx="646.3" cy="485.2" r="2.5" fill="none" stroke="#c9d3de" stroke-width="0.55"/>
<text x="646.3" y="486.9" font-size="3.8" fill="#c9d3de" text-anchor="middle">?</text>
<text x="664.70" y="479.30" font-size="6.30" fill="#ffffff" font-weight="700" textLength="21.70" lengthAdjust="spacingAndGlyphs" >Highest</text>
<text x="664.70" y="487.30" font-size="6.30" fill="#ffffff" font-weight="700" textLength="38.40" lengthAdjust="spacingAndGlyphs" >Cost Per Lead</text>
<circle cx="707.0" cy="485.2" r="2.5" fill="none" stroke="#c9d3de" stroke-width="0.55"/>
<text x="707.0" y="486.9" font-size="3.8" fill="#c9d3de" text-anchor="middle">?</text>
<text x="726.00" y="479.30" font-size="6.30" fill="#ffffff" font-weight="700" textLength="13.40" lengthAdjust="spacingAndGlyphs" >Total</text>
<text x="726.00" y="487.30" font-size="6.30" fill="#ffffff" font-weight="700" textLength="17.40" lengthAdjust="spacingAndGlyphs" >Spend</text>
<circle cx="747.0" cy="485.2" r="2.5" fill="none" stroke="#c9d3de" stroke-width="0.55"/>
<text x="747.0" y="486.9" font-size="3.8" fill="#c9d3de" text-anchor="middle">?</text>
<text x="786.70" y="479.30" font-size="6.30" fill="#ffffff" font-weight="700" textLength="10.00" lengthAdjust="spacingAndGlyphs" >Bid</text>
<text x="786.70" y="487.30" font-size="6.30" fill="#ffffff" font-weight="700" textLength="24.30" lengthAdjust="spacingAndGlyphs" >Strength</text>
<circle cx="815.0" cy="485.2" r="2.5" fill="none" stroke="#c9d3de" stroke-width="0.55"/>
<text x="815.0" y="486.9" font-size="3.8" fill="#c9d3de" text-anchor="middle">?</text>
<text x="328.30" y="487.40" font-size="6.30" fill="#ffffff" font-weight="700" textLength="45.40" lengthAdjust="spacingAndGlyphs" >Campaign Name</text>
<rect x="310.00" y="518.50" width="580.00" height="25.20" fill="#f2f6fa" />
<rect x="310.00" y="518.00" width="580.00" height="1.00" fill="#dde4ec" />
<rect x="310.00" y="543.20" width="580.00" height="1.00" fill="#dde4ec" />
<rect x="310.00" y="568.90" width="580.00" height="25.40" fill="#f2f6fa" />
<rect x="310.00" y="568.40" width="580.00" height="1.00" fill="#dde4ec" />
<rect x="310.00" y="593.80" width="580.00" height="1.00" fill="#dde4ec" />
<rect x="310.00" y="619.40" width="580.00" height="20.60" fill="#f2f6fa" />
<rect x="310.00" y="618.90" width="580.00" height="1.00" fill="#dde4ec" />
<text x="318.10" y="508.60" font-size="6.30" fill="#3a475a" stroke="#3a475a" stroke-width="0.18" >1</text>
<text x="328.50" y="508.60" font-size="6.30" fill="#1f3050" font-weight="700" textLength="62.90" lengthAdjust="spacingAndGlyphs" >Austin Electrician Pros</text>
<text x="508.00" y="508.60" font-size="6.30" fill="#2b9ad6" font-weight="700" >24</text>
<text x="558.90" y="508.60" font-size="6.30" fill="#2b9ad6" font-weight="700" >21</text>
<text x="604.20" y="508.60" font-size="6.30" fill="#3a475a" stroke="#3a475a" stroke-width="0.18" >$68.50</text>
<text x="664.70" y="508.60" font-size="6.30" fill="#3a475a" stroke="#3a475a" stroke-width="0.18" >$73.00</text>
<text x="726.00" y="508.60" font-size="6.30" fill="#3a475a" stroke="#3a475a" stroke-width="0.18" >$1,438.50</text>
<circle cx="791" cy="506.40" r="3.7" fill="#5bbf2a"/>
<text x="798.70" y="508.60" font-size="6.30" fill="#3a475a" stroke="#3a475a" stroke-width="0.18" >97</text>
<text x="318.10" y="533.80" font-size="6.30" fill="#3a475a" stroke="#3a475a" stroke-width="0.18" >2</text>
<text x="328.50" y="533.80" font-size="6.30" fill="#1f3050" font-weight="700" textLength="50.90" lengthAdjust="spacingAndGlyphs" >Austin HVAC Pros</text>
<text x="508.00" y="533.80" font-size="6.30" fill="#2b9ad6" font-weight="700" >36</text>
<text x="558.90" y="533.80" font-size="6.30" fill="#2b9ad6" font-weight="700" >32</text>
<text x="604.20" y="533.80" font-size="6.30" fill="#3a475a" stroke="#3a475a" stroke-width="0.18" >$78.00</text>
<text x="664.70" y="533.80" font-size="6.30" fill="#3a475a" stroke="#3a475a" stroke-width="0.18" >$81.00</text>
<text x="726.00" y="533.80" font-size="6.30" fill="#3a475a" stroke="#3a475a" stroke-width="0.18" >$2,496.00</text>
<circle cx="791" cy="531.60" r="3.7" fill="#f6b21b"/>
<text x="798.70" y="533.80" font-size="6.30" fill="#3a475a" stroke="#3a475a" stroke-width="0.18" >71</text>
<text x="318.10" y="559.00" font-size="6.30" fill="#3a475a" stroke="#3a475a" stroke-width="0.18" >3</text>
<text x="328.5" y="559.00" font-size="6.3" fill="#1f3050" font-weight="700" textLength="120.00" lengthAdjust="spacingAndGlyphs">Austin Plumbing Pros<tspan font-weight="400" fill="#3a475a"> (Canceled 04/12/25)</tspan></text>
<text x="508.00" y="559.00" font-size="6.30" fill="#2b9ad6" font-weight="700" >67</text>
<text x="558.90" y="559.00" font-size="6.30" fill="#2b9ad6" font-weight="700" >63</text>
<text x="604.20" y="559.00" font-size="6.30" fill="#3a475a" stroke="#3a475a" stroke-width="0.18" >$71.00</text>
<text x="664.70" y="559.00" font-size="6.30" fill="#3a475a" stroke="#3a475a" stroke-width="0.18" >$73.50</text>
<text x="726.00" y="559.00" font-size="6.30" fill="#3a475a" stroke="#3a475a" stroke-width="0.18" >$4,473.00</text>
<circle cx="791" cy="556.80" r="3.7" fill="#5bbf2a"/>
<text x="798.70" y="559.00" font-size="6.30" fill="#3a475a" stroke="#3a475a" stroke-width="0.18" >93</text>
<text x="318.10" y="584.20" font-size="6.30" fill="#3a475a" stroke="#3a475a" stroke-width="0.18" >4</text>
<text x="328.50" y="584.20" font-size="6.30" fill="#1f3050" font-weight="700" textLength="90.65" lengthAdjust="spacingAndGlyphs" >Marketplace – Austin Electrician</text>
<text x="508.00" y="584.20" font-size="6.30" fill="#2b9ad6" font-weight="700" >43</text>
<text x="558.90" y="584.20" font-size="6.30" fill="#2b9ad6" font-weight="700" >39</text>
<text x="604.20" y="584.20" font-size="6.30" fill="#3a475a" stroke="#3a475a" stroke-width="0.18" >$57.00</text>
<text x="664.70" y="584.20" font-size="6.30" fill="#3a475a" stroke="#3a475a" stroke-width="0.18" >$58.50</text>
<text x="726.00" y="584.20" font-size="6.30" fill="#3a475a" stroke="#3a475a" stroke-width="0.18" >$2,223.00</text>
<circle cx="791" cy="582.00" r="3.7" fill="#e2120f"/>
<text x="798.70" y="584.20" font-size="6.30" fill="#3a475a" stroke="#3a475a" stroke-width="0.18" >35</text>
<text x="318.10" y="609.60" font-size="6.30" fill="#3a475a" stroke="#3a475a" stroke-width="0.18" >5</text>
<text x="328.50" y="609.60" font-size="6.30" fill="#1f3050" font-weight="700" textLength="78.80" lengthAdjust="spacingAndGlyphs" >Marketplace – Austin HVAC</text>
<text x="508.00" y="609.60" font-size="6.30" fill="#2b9ad6" font-weight="700" >29</text>
<text x="558.90" y="609.60" font-size="6.30" fill="#2b9ad6" font-weight="700" >25</text>
<text x="604.20" y="609.60" font-size="6.30" fill="#3a475a" stroke="#3a475a" stroke-width="0.18" >$68.00</text>
<text x="664.70" y="609.60" font-size="6.30" fill="#3a475a" stroke="#3a475a" stroke-width="0.18" >$72.50</text>
<text x="726.00" y="609.60" font-size="6.30" fill="#3a475a" stroke="#3a475a" stroke-width="0.18" >$1,700.00</text>
<circle cx="791" cy="607.40" r="3.7" fill="#5bbf2a"/>
<text x="798.70" y="609.60" font-size="6.30" fill="#3a475a" stroke="#3a475a" stroke-width="0.18" >89</text>
</svg>
</body></html>
